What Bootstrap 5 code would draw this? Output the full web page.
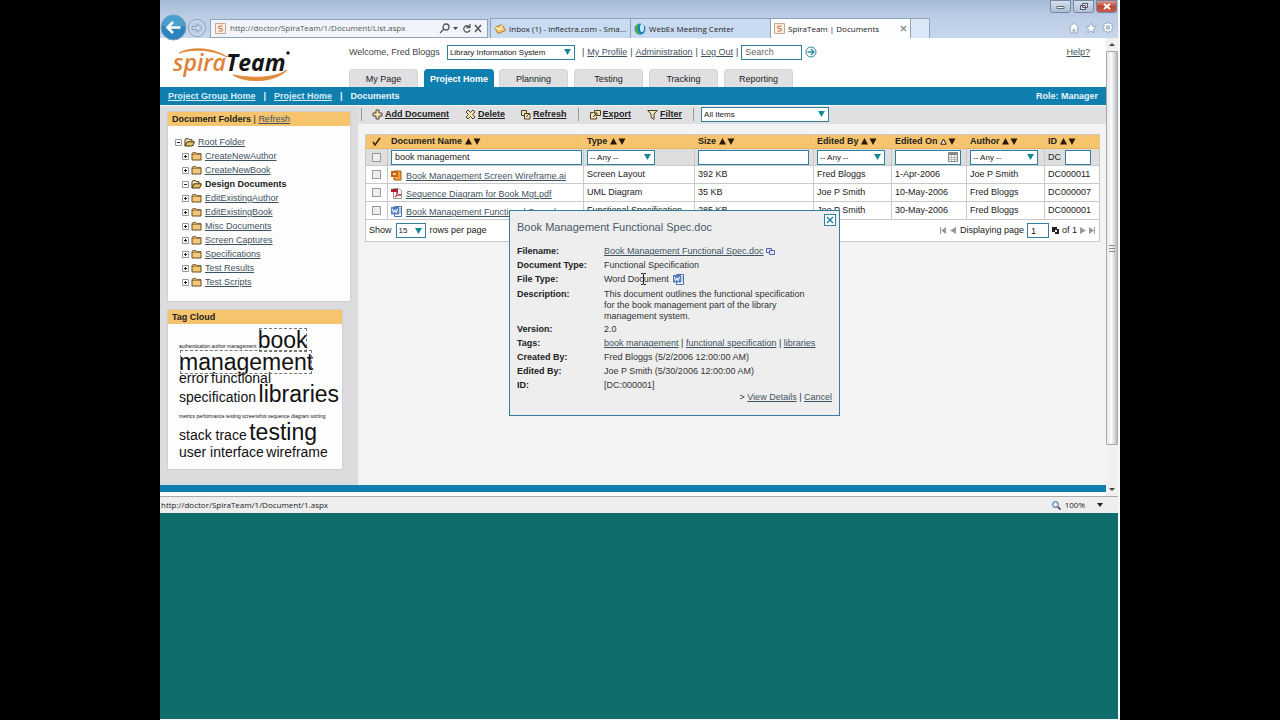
<!DOCTYPE html>
<html lang="en">
<head>
<meta charset="utf-8">
<meta name="viewport" content="width=device-width, initial-scale=1">
<title>SpiraTeam | Documents</title>
<link href="https://cdn.jsdelivr.net/npm/bootstrap@5.3.0/dist/css/bootstrap.min.css" rel="stylesheet">
<style>
:root { --blue:#0f7fb0; --gold:#f6c46c; --line:#c9c9c9; --field:#2f7f9d; }
body { background:#000; color:#222; font:9px/14px "Liberation Sans", Arial, sans-serif; }
a { color:#3f5260; }
button, input, select { font-family:inherit; }
svg { flex-shrink:0; }
.desktop { width:75%; background:#0f6e6c; border:solid #f4f8f8; border-width:0 2px 1px 0; }
.ui-font { font-family:"Open Sans", "Noto Sans", sans-serif; font-size:8px; line-height:16px; color:#222; }

/* browser frame */
.chrome { height:38px; background:linear-gradient(#a6bbd8, #bccde4 45%, #c6d6ec); }
.win-row { height:18px; gap:2px; padding-right:1px; }
.chrome-row { height:20px; }
.back-btn { width:27px; height:27px; margin:-4px 0 -3px; }
.fwd-btn { width:20px; height:20px; margin-right:3px; }
.address { width:278px; height:19px; background:#f1f5fb; border:1px solid #8fa3bd; margin-right:2px; }
.address input { font:inherit; color:#555; }
.btab { width:141px; height:20px; color:#222; text-decoration:none; background:#c9dbf1; border:1px solid #8fa3bd; border-bottom:0; margin-right:-1px; padding:0 3px; gap:3px; white-space:nowrap; }
.btab.active { background:#fcfdfe; }
.btab-new { width:20px; height:20px; background:#dbe8f7; border:1px solid #8fa3bd; border-bottom:0; }
.win-btn { width:21px; height:13px; border:1px solid #75879f; background:linear-gradient(#d3deec, #aebfd6); border-radius:0 0 3px 3px; }
.win-btn.close-w { background:linear-gradient(#dc9a90, #bd4332 50%, #c85e4c); }

/* scrollbar */
.scroller { width:12px; background:#f0f0f0; }
.thumb { background:linear-gradient(90deg, #e9e9e9, #fafafa 45%, #b9b9be); border:1px solid #a9a9ae; border-radius:1px; margin-bottom:38px; }

/* application header */
.brand { width:189px; padding-left:12px; }
.userbar { height:18px; margin-top:5px; gap:3px; color:#444; white-space:nowrap; }
.field { height:15px; padding:0 3px; border:1px solid var(--field); border-radius:0; font-size:9px; line-height:13px; background-color:#fff; color:#222; min-height:0; min-width:0; }
select.field { font-size:8px; padding:0 14px 0 2px; background-image:url("data:image/svg+xml,%3Csvg xmlns='http://www.w3.org/2000/svg' viewBox='0 0 8 7'%3E%3Cpath d='M0 0h8L4 7z' fill='%23158795'/%3E%3C/svg%3E"); background-size:7px 6px; background-position:right 3px center; }
.tabs-row { margin-top:8px; gap:6px; }
.tabs-row .nav-link { width:69px; height:18px; padding:2px 0 0; background:#e0e0e2; color:#222; border-radius:4px 4px 0 0; text-align:center; border:1px solid #d4d4d6; border-bottom:0; }
.tabs-row .nav-link.active { width:70px; margin-right:-1px; background:var(--blue); border-color:var(--blue); color:#fff; font-weight:bold; white-space:nowrap; }
.crumbs { height:18px; background:var(--blue); color:#e9f4fa; font-weight:bold; padding:0 8px; gap:8px; }
.crumbs a { color:#d4ecf7; }

/* side panels */
.side { width:198px; background:#dcdcde; border-top:1px solid #f6f6f6; padding:5px 7px 15px; }
.panel { background:#fdfdfd; border:1px solid #cfcfd1; }
.panel-title { background:var(--gold); font-size:9px; line-height:14px; font-weight:bold; padding-left:4px; margin:0; }
.panel-title a { font-weight:normal; }
.tree { padding:9px 0 12px 7px; }
.tree li { height:14px; gap:3px; }
.tree ul li { margin-left:7px; }
.tree li:first-child { margin-left:0; }
.twig { width:7px; height:7px; margin-right:-1px; }
.tags { width:176px; margin-top:7px; }
.cloud { padding:10px 0 4px 11px; color:#111; white-space:nowrap; }
.cloud a { color:inherit; text-decoration:none; line-height:0; }
.cloud .t1 { font-size:5px; line-height:0; } .cloud .t3 { font-size:14px; } .cloud .t5 { font-size:23px; }
.cloud .sel { outline:1px dashed #777; outline-offset:-2px; }
.ln-a { line-height:22px; } .ln-b { line-height:2px; } .ln-c { line-height:24px; padding-top:6px; } .ln-d { font-size:5px; line-height:10px; } .ln-e { line-height:12px; padding-top:10px; } .ln-f { line-height:22px; }

/* document list */
.main { background:#f3f3f4; }
.toolbar { height:19px; background:#e0e0e2; border-top:1px solid #f6f6f6; padding:0 0 2px 3px; gap:16px; }
.toolbar .rule { width:1px; height:13px; background:#999; margin:0 -5px; }
.toolbar .rule:first-child { margin:0 -6px 0 0; }
.toolbar select { margin-left:-4px; }
.tool { font-size:9px; line-height:14px; font-weight:bold; text-decoration:underline; padding:0; border:0; color:#222; gap:2px; }
.grid-wrap { padding:10px 7px 0; }
.docs { table-layout:fixed; width:100%; background:#fff; border:1px solid var(--line); border-collapse:collapse; white-space:nowrap; }
.docs th, .docs td { padding:0 0 0 3px; height:18px; line-height:17px; border-right:1px solid var(--line); border-bottom:1px solid var(--line); vertical-align:top; }
.docs thead th { background:var(--gold); height:14px; line-height:13px; border-color:#e6b45e; border-right-color:#eec982; }
.docs .filters td { background:#dededf; height:17px; line-height:15px; padding-right:1px; vertical-align:middle; }
.docs .chk { padding:0; text-align:center; vertical-align:middle; }
.docs .chk input { width:9px; height:9px; border:1px solid #999; border-radius:0; background-color:#ededed; display:block; margin:auto; float:none; }
.docs .doc-name { vertical-align:bottom; line-height:13px; }
.docs tfoot td { height:22px; vertical-align:middle; }
.pager { gap:3px; margin-right:3px; }
.c-chk{width:22px}.c-name{width:196px}.c-type{width:111px}.c-size{width:119px}.c-by{width:78px}.c-on{width:75px}.c-auth{width:78px}.c-id{width:55px}
.w-any { width:68px; } .w-id { width:26px; } .w-project { width:128px; } .w-search { width:61px; } .w-page { width:22px; } .w-rows { width:30px; }
.date-box { width:66px; }
.date-box svg { right:3px; top:2px; }

/* document details */
.detail { left:151px; top:105px; width:331px; background:#eeeeef; border:1px solid var(--field); padding:8px 7px 12px; color:#333; z-index:2; }
.detail h2 { font-size:11px; line-height:16px; margin:0 0 9px; color:#4a5866; }
.detail .close-box { right:3px; top:3px; width:12px; height:12px; padding:0; border:1px solid var(--field); border-radius:0; background:#fff; line-height:0; }
.facts { display:grid; grid-template-columns:87px 1fr; margin:0; }
.facts dd { margin:0; }
.facts dt { color:#222; }
.facts .desc { line-height:11px; padding:3px 20px 0 0; }
.actions { line-height:11px; }
.ibeam { left:130px; top:62px; }
.foot-bar { height:7px; background:var(--blue); }
.status { height:17px; background:#eeeeef; border-top:1px solid #aaa; padding:0 14px 0 1px; }
</style>
</head>
<body>
<svg class="d-none" aria-hidden="true">
  <symbol id="i-folder" viewBox="0 0 11 9"><path d="M1 8V1.500L2 .7h3l1 1h4V8z" fill="#f3c878" stroke="#6b4f22"/><path d="M1 2.400h9" stroke="#6b4f22" stroke-width=".6"/></symbol>
  <symbol id="i-open" viewBox="0 0 11 9"><path d="M1 8V1.5L2 .7h2.5l1 1H8V4" fill="#fff0c0" stroke="#3e3314"/><path d="M1 8l2-4.2h7.5L8.6 8z" fill="#e7be62" stroke="#3e3314"/></symbol>
  <symbol id="i-plus" viewBox="0 0 7 7"><path d="M.5.5h6v6h-6z" fill="#fff" stroke="#999"/><path d="M2 3.500h3M3.500 2v3" stroke="#222"/></symbol>
  <symbol id="i-minus" viewBox="0 0 7 7"><path d="M.5.5h6v6h-6z" fill="#fff" stroke="#999"/><path d="M2 3.500h3" stroke="#222"/></symbol>
  <symbol id="i-sort" viewBox="0 0 16 7"><path d="M0 6.500h7L3.500 0zM8.500.5h7L12 7z" fill="#2b170c"/></symbol>
  <symbol id="i-sorted" viewBox="0 0 16 7"><path d="M.8 6.200h5.400L3.500 1z" fill="#fff" stroke="#2b170c"/><path d="M8.500.5h7L12 7z" fill="#2b170c"/></symbol>
  <symbol id="i-spira" viewBox="0 0 11 11"><path d="M.5.5h10v10H.5z" fill="#fbeee5" stroke="#c9a68f"/><path d="M7.500 3H5Q3.500 3 3.500 4.300T5 5.500h1q1.500 0 1.500 1.300T6 8H3.500" fill="none" stroke="#cf6a36"/></symbol>
  <symbol id="i-word" viewBox="0 0 11 11"><path d="M3.500.5h7v10h-7z" fill="#fff" stroke="#4a6fa8"/><path d="M8 3h2M8 5h2M8 7h2" stroke="#7c9ccc"/><path d="M0 1h8v7.500H0z" fill="#5580bd"/><path d="M1.300 2.800l1.200 4 1.400-3 1.400 3 1.200-4" fill="none" stroke="#fff"/></symbol>
</svg>

<div class="desktop mx-auto min-vh-100">
  <header class="chrome ui-font">
    <div class="win-row d-flex justify-content-end">
      <button class="btn win-btn p-0 d-flex" aria-label="Minimize"><svg width="19" height="11"><path d="M6 5.500h7v2H6z" fill="#fff" stroke="#667"/></svg></button>
      <button class="btn win-btn p-0 d-flex" aria-label="Restore"><svg width="19" height="11"><path d="M8.500 2.500h5v4h-5zM6.500 4.500h5v4h-5z" fill="#dfe6ef" stroke="#556"/></svg></button>
      <button class="btn win-btn close-w p-0 d-flex" aria-label="Close"><svg width="19" height="11"><path d="M7 3l6 5M13 3L7 8" stroke="#fff" stroke-width="2"/></svg></button>
    </div>
    <div class="chrome-row d-flex align-items-center">
      <button class="btn p-0 border-0 back-btn d-flex" aria-label="Back"><svg viewBox="0 0 27 27"><circle cx="13.500" cy="13.500" r="12.500" fill="#2b86bd" stroke="#7f9fba"/><path d="M2 12a11.500 11.500 0 0 1 23 0z" fill="#5aa9d4" opacity=".7"/><path d="M20.500 13.500H8M13 8l-5.500 5.500L13 19" fill="none" stroke="#fff" stroke-width="2.600"/></svg></button>
      <button class="btn p-0 border-0 fwd-btn d-flex" aria-label="Forward"><svg viewBox="0 0 20 20"><circle cx="10" cy="10" r="8.500" fill="#b9cce2" stroke="#8ba2bf"/><circle cx="10" cy="10" r="7" fill="none" stroke="#d9e5f2"/><path d="M5 8.500h5V6l5 4-5 4v-2.500H5z" fill="#c9d8ea" stroke="#8ba2bf"/></svg></button>
      <div class="address d-flex align-items-center px-1 gap-1">
        <svg width="11" height="11"><use href="#i-spira"/></svg>
        <input class="form-control border-0 bg-transparent p-0 flex-grow-1" aria-label="Address" value="http://doctor/SpiraTeam/1/Document/List.aspx">
        <svg width="44" height="11" fill="none" stroke="#555" stroke-width="1.300"><circle cx="7" cy="4" r="3"/><path d="M5 6L1 10"/><path d="M14 4h5l-2.500 3z" fill="#444" stroke="none"/><path d="M30.500 4A3.200 3.200 0 1 0 31 7M31 1v3.500h-3.500"/><path d="M36 2l6 7M42 2l-6 7" stroke-width="1.500"/></svg>
      </div>
      <nav class="d-flex" aria-label="Browser tabs">
        <a class="btab d-flex align-items-center" href="#"><svg width="12" height="10"><path d="M.5 3.500L8 .5l3.500 6L4 9.500z" fill="#f6c768" stroke="#ad7c2f"/><path d="M.5 3.500L7 5.500 8 .5" fill="none" stroke="#fff"/></svg><span>Inbox (1) - inflectra.com - Sma...</span></a>
        <a class="btab d-flex align-items-center" href="#"><svg width="12" height="12"><circle cx="6" cy="6" r="5.500" fill="#1d7fb8"/><path d="M6 .5C2 3 3 9 7 11.500A5.500 5.500 0 0 1 6 .5z" fill="#57b33e"/><ellipse cx="8" cy="5" rx="2" ry="4" fill="#c5ecf8"/></svg><span>WebEx Meeting Center</span></a>
        <a class="btab active d-flex align-items-center" href="#" aria-current="page"><svg width="11" height="11"><use href="#i-spira"/></svg><span class="flex-grow-1">SpiraTeam | Documents</span><svg width="7" height="7"><path d="M1 1l5 5M6 1L1 6" stroke="#888" stroke-width="1.300"/></svg></a>
        <button class="btab-new p-0" aria-label="New tab"></button>
      </nav>
      <div class="d-flex ms-auto me-1">
        <svg width="46" height="12" fill="#fdfdfd" stroke="#8396b0" stroke-width=".7"><path d="M1 6l5-5 5 5H9.500v5H7V7.500H5V11H2.500V6z"/><path d="M23 .8l1.500 3.500 3.700.3-2.800 2.500.9 3.700L23 8.800l-3.300 2 .9-3.700L17.800 4.600l3.700-.3z"/><path d="M39 .5h2l.4 1.400 1.300-.7 1.400 1.400-.7 1.300 1.400.5v2l-1.400.5.7 1.300-1.400 1.400-1.300-.7-.4 1.400h-2l-.5-1.400-1.300.7-1.400-1.400.7-1.300-1.400-.5v-2l1.400-.5-.7-1.300 1.400-1.400 1.300.7z"/><circle cx="40" cy="5.500" r="1.800" fill="#b9cbe2"/></svg>
      </div>
    </div>
  </header>

  <div class="d-flex bg-white">
    <div class="flex-grow-1 pb-1" style="min-width:0">
      <div class="d-flex">
        <div class="brand"><a href="#" aria-label="spiraTeam"><svg width="122" height="48" viewBox="0 0 122 48" font-family="'Open Sans','Noto Sans',sans-serif" font-style="italic">
          <path d="M7 15C20 8 42 10 55 19C42 12 22 10 7 15z" fill="#e08a3c" stroke="#e08a3c"/>
          <path d="M61 37C76 46 104 44 115 32C104 40 82 41 61 37z" fill="#e08a3c" stroke="#e08a3c"/>
          <text x="1" y="33" font-size="23" fill="#df8136" font-weight="600">spira</text><text x="54" y="33" font-size="23" fill="#151515" font-weight="700">Team</text><circle cx="116" cy="15" r="1.800" fill="#222"/></svg></a></div>
        <div class="flex-grow-1">
          <div class="userbar d-flex align-items-center">
            <label for="project">Welcome, Fred Bloggs</label>
            <select id="project" class="form-select field w-project ms-1"><option>Library Information System</option></select>
            <span class="ms-1">|</span><a href="#">My Profile</a><span>|</span><a href="#">Administration</a><span>|</span><a href="#">Log Out</a><span>|</span>
            <input class="form-control field w-search" placeholder="Search" aria-label="Search">
            <button class="btn p-0 border-0 d-flex" aria-label="Go"><svg width="12" height="12" fill="none" stroke="#2c8aa8"><circle cx="6" cy="6" r="5"/><path d="M2.500 6h6.500M6 3l3 3-3 3" stroke-width="1.300"/></svg></button>
            <a class="ms-auto me-3" href="#">Help?</a>
          </div>
          <nav class="nav tabs-row">
            <a class="nav-link" href="#">My Page</a><a class="nav-link active" aria-current="page" href="#">Project Home</a><a class="nav-link" href="#">Planning</a><a class="nav-link" href="#">Testing</a><a class="nav-link" href="#">Tracking</a><a class="nav-link" href="#">Reporting</a>
          </nav>
        </div>
      </div>
      <div class="crumbs d-flex align-items-center"><a href="#">Project Group Home</a><span>|</span><a href="#">Project Home</a><span>|</span><span>Documents</span><span class="ms-auto">Role: Manager</span></div>

      <div class="d-flex">
        <aside class="side flex-shrink-0">
          <section class="panel">
            <h2 class="panel-title">Document Folders <span class="fw-normal">|</span> <a href="#">Refresh</a></h2>
            <div class="tree">
              <ul class="list-unstyled m-0">
                <li class="d-flex align-items-center"><svg class="twig"><use href="#i-minus"/></svg><svg width="11" height="9"><use href="#i-open"/></svg><a href="#">Root Folder</a></li>
                <li class="d-flex align-items-center"><svg class="twig"><use href="#i-plus"/></svg><svg width="11" height="9"><use href="#i-folder"/></svg><a href="#">CreateNewAuthor</a></li>
                <li class="d-flex align-items-center"><svg class="twig"><use href="#i-plus"/></svg><svg width="11" height="9"><use href="#i-folder"/></svg><a href="#">CreateNewBook</a></li>
                <li class="d-flex align-items-center"><svg class="twig"><use href="#i-minus"/></svg><svg width="11" height="9"><use href="#i-open"/></svg><b>Design Documents</b></li>
                <li class="d-flex align-items-center"><svg class="twig"><use href="#i-plus"/></svg><svg width="11" height="9"><use href="#i-folder"/></svg><a href="#">EditExistingAuthor</a></li>
                <li class="d-flex align-items-center"><svg class="twig"><use href="#i-plus"/></svg><svg width="11" height="9"><use href="#i-folder"/></svg><a href="#">EditExistingBook</a></li>
                <li class="d-flex align-items-center"><svg class="twig"><use href="#i-plus"/></svg><svg width="11" height="9"><use href="#i-folder"/></svg><a href="#">Misc Documents</a></li>
                <li class="d-flex align-items-center"><svg class="twig"><use href="#i-plus"/></svg><svg width="11" height="9"><use href="#i-folder"/></svg><a href="#">Screen Captures</a></li>
                <li class="d-flex align-items-center"><svg class="twig"><use href="#i-plus"/></svg><svg width="11" height="9"><use href="#i-folder"/></svg><a href="#">Specifications</a></li>
                <li class="d-flex align-items-center"><svg class="twig"><use href="#i-plus"/></svg><svg width="11" height="9"><use href="#i-folder"/></svg><a href="#">Test Results</a></li>
                <li class="d-flex align-items-center"><svg class="twig"><use href="#i-plus"/></svg><svg width="11" height="9"><use href="#i-folder"/></svg><a href="#">Test Scripts</a></li>
              </ul>
            </div>
          </section>
          <section class="panel tags">
            <h2 class="panel-title">Tag Cloud</h2>
            <div class="cloud">
              <div class="ln-a"><span class="t1"><a href="#">authentication</a> <a href="#">author management</a> </span><a class="t5 sel" href="#">book</a></div>
              <div class="ln-a"><a class="t5 sel" href="#">management</a></div>
              <div class="ln-b"><a class="t3" href="#">error</a> <a class="t3" href="#">functional</a></div>
              <div class="ln-c"><a class="t3" href="#">specification</a> <a class="t5" href="#">libraries</a></div>
              <div class="ln-d"><a href="#">metrics</a> <a href="#">performance testing</a> <a href="#">screenshot</a> <a href="#">sequence diagram</a> <a href="#">sorting</a></div>
              <div class="ln-e"><a class="t3" href="#">stack trace</a> <a class="t5" href="#">testing</a></div>
              <div class="ln-f"><a class="t3" href="#">user interface</a> <a class="t3" href="#">wireframe</a></div>
            </div>
          </section>
        </aside>

        <main class="main flex-grow-1 position-relative" style="min-width:0">
          <div class="toolbar d-flex align-items-center">
            <span class="rule"></span>
            <button class="btn tool d-flex align-items-center"><svg width="11" height="11"><path d="M4 1h3v3h3v3H7v3H4V7H1V4h3z" fill="#f1e2b8" stroke="#4d4225"/></svg>Add Document</button>
            <button class="btn tool d-flex align-items-center"><svg width="11" height="11"><path d="M3 1l2.500 2.500L8 1l2 2-2.500 2.500L10 8l-2 2-2.500-2.500L3 10 1 8l2.500-2.500L1 3z" fill="#f1e2b8" stroke="#4d4225"/></svg>Delete</button>
            <button class="btn tool d-flex align-items-center"><svg width="10" height="11" fill="#f1e2b8" stroke="#4d4225"><path d="M.5 1.500h5v5h-5z"/><path d="M3.500 4.500h5.500v5.500H3.500z"/><path d="M5 8l3-3" /></svg>Refresh</button>
            <span class="rule"></span>
            <button class="btn tool d-flex align-items-center"><svg width="11" height="11" fill="#f1e2b8" stroke="#4d4225"><path d="M4.500 1.500h6v5h-6z"/><path d="M3.500 3.500h-3v6.500h6V8"/><path d="M3 8l4-4M5 4h2v2" fill="none"/></svg>Export</button>
            <button class="btn tool d-flex align-items-center"><svg width="11" height="11"><path d="M.7 1.500h9.600L7 5v5.300L4 8.500V5z" fill="#f1e2b8" stroke="#4d4225"/></svg>Filter</button>
            <span class="rule"></span>
            <select class="form-select field w-project" aria-label="Saved filter"><option>All Items</option></select>
          </div>
          <div class="grid-wrap">
            <table class="docs">
              <colgroup><col class="c-chk"><col class="c-name"><col class="c-type"><col class="c-size"><col class="c-by"><col class="c-on"><col class="c-auth"><col class="c-id"></colgroup>
              <thead>
                <tr><th class="chk" scope="col"><svg class="d-block mx-auto" width="9" height="9"><path d="M1 5l2 3 5-7" fill="none" stroke="#3b220c" stroke-width="1.500"/></svg></th>
                <th scope="col">Document Name <svg width="16" height="7"><use href="#i-sort"/></svg></th>
                <th scope="col">Type <svg width="16" height="7"><use href="#i-sort"/></svg></th>
                <th scope="col">Size <svg width="16" height="7"><use href="#i-sort"/></svg></th>
                <th scope="col">Edited By <svg width="16" height="7"><use href="#i-sort"/></svg></th>
                <th scope="col">Edited On <svg width="16" height="7"><use href="#i-sorted"/></svg></th>
                <th scope="col">Author <svg width="16" height="7"><use href="#i-sort"/></svg></th>
                <th scope="col">ID <svg width="16" height="7"><use href="#i-sort"/></svg></th></tr>
              </thead>
              <tbody>
                <tr class="filters">
                  <td class="chk"><input class="form-check-input" type="checkbox" aria-label="Select all"></td>
                  <td><input class="form-control field" aria-label="Name filter" value="book management"></td>
                  <td><select class="form-select field w-any" aria-label="Type filter"><option>-- Any --</option></select></td>
                  <td class="pe-1"><input class="form-control field" aria-label="Size filter"></td>
                  <td><select class="form-select field w-any" aria-label="Edited by filter"><option>-- Any --</option></select></td>
                  <td><div class="date-box position-relative"><input class="form-control field" aria-label="Date filter"><svg class="position-absolute" width="10" height="10"><path d="M.5.5h9v9h-9z" fill="#f3f3f3" stroke="#888"/><path d="M1 2h8" stroke="#888" stroke-width="2"/><path d="M3.500 3v6M6.500 3v6M1 5.500h8M1 7.500h8" stroke="#bbb"/></svg></div></td>
                  <td><select class="form-select field w-any" aria-label="Author filter"><option>-- Any --</option></select></td>
                  <td><div class="d-flex gap-1 align-items-center"><label for="idf">DC</label><input id="idf" class="form-control field w-id"></div></td>
                </tr>
                <tr><td class="chk"><input class="form-check-input" type="checkbox" aria-label="Select DC000011"></td>
                  <td class="doc-name"><svg class="me-1 align-top" width="11" height="11"><path d="M3 1h7v9H3z" fill="#f3a13a" stroke="#a85a10"/><path d="M0 1h7v6H0z" fill="#c8640f"/><path d="M2 3h3v2H2z" fill="#ffd79a"/></svg><a href="#">Book Management Screen Wireframe.ai</a></td><td>Screen Layout</td><td>392 KB</td><td>Fred Bloggs</td><td>1-Apr-2006</td><td>Joe P Smith</td><td>DC000011</td></tr>
                <tr><td class="chk"><input class="form-check-input" type="checkbox" aria-label="Select DC000007"></td>
                  <td class="doc-name"><svg class="me-1 align-top" width="11" height="11"><path d="M2.500.5H8l2.500 2.500v7.500h-8z" fill="#fff" stroke="#999"/><path d="M0 1h7v3H0z" fill="#b5202c"/><path d="M4 9c2-2 2-4 2-5 0 2 2 3 4 3-2 0-4 .500-6 2z" fill="none" stroke="#b5202c"/></svg><a href="#">Sequence Diagram for Book Mgt.pdf</a></td><td>UML Diagram</td><td>35 KB</td><td>Joe P Smith</td><td>10-May-2006</td><td>Fred Bloggs</td><td>DC000007</td></tr>
                <tr><td class="chk"><input class="form-check-input" type="checkbox" aria-label="Select DC000001"></td>
                  <td class="doc-name"><svg class="me-1 align-top" width="11" height="11"><use href="#i-word"/></svg><a href="#">Book Management Functional Spec.doc</a></td><td>Functional Specification</td><td>285 KB</td><td>Joe P Smith</td><td>30-May-2006</td><td>Fred Bloggs</td><td>DC000001</td></tr>
              </tbody>
              <tfoot><tr><td colspan="8">
                <div class="d-flex align-items-center">
                  <label for="rows">Show</label><select id="rows" class="form-select field w-rows mx-1"><option>15</option></select><span>rows per page</span>
                  <div class="pager d-flex align-items-center ms-auto">
                    <svg width="17" height="7" fill="#999"><path d="M0 0h1v7H0zM6 0v7L1 3.500zM16 0v7l-6-3.500z"/></svg><label for="pg">Displaying page</label><input id="pg" class="form-control field w-page" value="1"><svg width="7" height="7"><path d="M0 0h5v3H3v2H0zM7 7H3V5h2V2h2z" fill="#222"/></svg><span>of 1</span><svg width="16" height="7" fill="#999"><path d="M0 0v7l6-3.500zM9 0v7l5-3.500zM14 0h1v7h-1z"/></svg>
                  </div>
                </div></td></tr></tfoot>
            </table>
          </div>

          <section class="detail position-absolute" role="dialog" aria-labelledby="dt">
            <button class="btn close-box position-absolute" aria-label="Close details"><svg width="10" height="10"><path d="M2 2l6 6M8 2L2 8" stroke="#1f7f9a" stroke-width="1.400"/></svg></button>
            <h2 id="dt" class="fw-normal">Book Management Functional Spec.doc</h2>
            <dl class="facts">
              <dt>Filename:</dt><dd><a href="#">Book Management Functional Spec.doc</a> <svg width="9" height="8" fill="#e6e6fa" stroke="#5b5ba8"><path d="M.5.5h5v4h-5z"/><path d="M3.500 2.500h5v4h-5z"/></svg></dd>
              <dt>Document Type:</dt><dd>Functional Specification</dd>
              <dt>File Type:</dt><dd class="d-flex align-items-center">Word Document <svg class="ms-1" width="11" height="11"><use href="#i-word"/></svg></dd>
              <dt class="desc">Description:</dt><dd class="desc">This document outlines the functional specification for the book management part of the library management system.</dd>
              <dt>Version:</dt><dd>2.0</dd>
              <dt>Tags:</dt><dd><a href="#">book management</a> | <a href="#">functional specification</a> | <a href="#">libraries</a></dd>
              <dt>Created By:</dt><dd>Fred Bloggs (5/2/2006 12:00:00 AM)</dd>
              <dt>Edited By:</dt><dd>Joe P Smith (5/30/2006 12:00:00 AM)</dd>
              <dt>ID:</dt><dd>[DC:000001]</dd>
            </dl>
            <div class="actions text-end">&gt; <a href="#">View Details</a> | <a href="#">Cancel</a></div>
            <svg class="ibeam position-absolute" width="7" height="12" aria-hidden="true"><path d="M1 .5h2l.5 1 .5-1h2M3.500 1v10M1 11.500h2l.5-1 .5 1h2" fill="none" stroke="#222"/></svg>
          </section>
        </main>
      </div>
      <div class="foot-bar"></div>
    </div>
    <div class="scroller d-flex flex-column align-items-center flex-shrink-0">
      <svg width="12" height="13"><path d="M3 8h6L6 5z" fill="#444"/></svg>
      <div class="thumb w-100 flex-grow-1 d-flex align-items-center justify-content-center"><svg width="6" height="7"><path d="M0 .5h6M0 3.500h6M0 6.500h6" stroke="#888"/></svg></div>
      <svg width="12" height="13"><path d="M3 5h6L6 8z" fill="#444"/></svg>
    </div>
  </div>
  <footer class="status ui-font d-flex align-items-center">
    <span>http://doctor/SpiraTeam/1/Document/1.aspx</span>
    <svg class="ms-auto me-1" width="9" height="9"><circle cx="3.500" cy="3.500" r="3" fill="#bcd6ee" stroke="#4c6f96"/><path d="M2 3.500h3M3.500 2v3" stroke="#fff"/><path d="M6 6l2.500 2.500" stroke="#333" stroke-width="1.500"/></svg>
    <span>100%</span>
    <svg class="ms-2 ps-1" width="11" height="4"><path d="M0 0h6L3 4z" fill="#222"/></svg>
  </footer>
</div>
<script src="https://cdn.jsdelivr.net/npm/bootstrap@5.3.0/dist/js/bootstrap.bundle.min.js"></script>
</body>
</html>
